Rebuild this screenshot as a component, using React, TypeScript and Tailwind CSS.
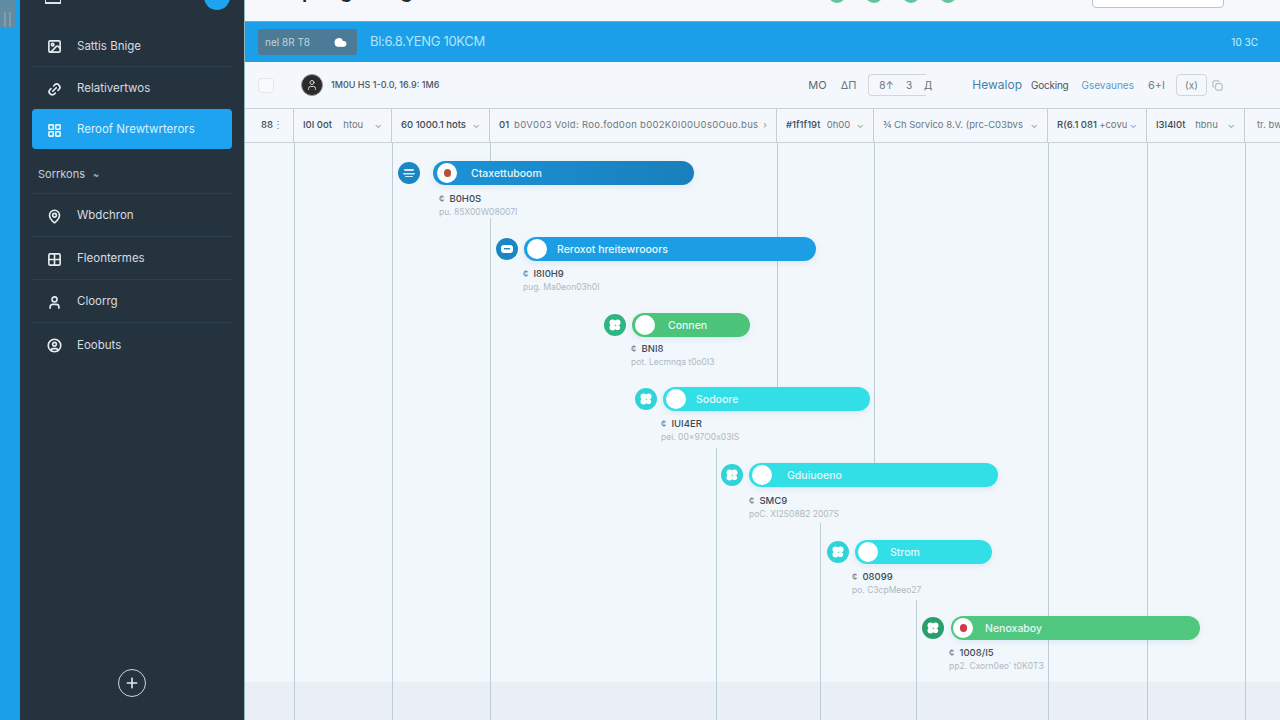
import React from "react";
import { Image, Link2, LayoutGrid, MapPin, Grid2x2, User, CircleUser, Plus, Cloud, Copy } from "lucide-react";

const font = { fontFamily: '"Inter", "Liberation Sans", sans-serif' };

function NavRow({ icon, label, h = "h-[43px]", divider = true }: { icon: React.ReactNode; label: string; h?: string; divider?: boolean }) {
  return (
    <div className={"mx-3 " + h + " flex items-center pt-[2px] pl-3.5 gap-[15px] text-[#d5dde3] text-[11.5px] " + (divider ? "border-b border-[#2e404d]" : "")}>
      <span className="w-4 flex justify-center text-[#e6edf1]">{icon}</span>
      <span>{label}</span>
    </div>
  );
}

function Sidebar() {
  return (
    <aside className="w-[225px] shrink-0 bg-[#25333f] border-r border-[#8fb7bd] flex flex-col relative">
      <div className="h-[25px] px-3 flex justify-between items-start relative">
        <div className="ml-[13px] w-4 h-[4px] border-b-2 border-x border-[#dfe6ea]" />
        <div className="w-[26px] h-[26px] rounded-full bg-[#1ea3f0] -mt-[16px] mr-[2px]" />
      </div>
      <NavRow h="h-[42px]" icon={<Image size={15} strokeWidth={2.6} />} label="Sattis Bnige" />
      <NavRow h="h-[42px]" divider={false} icon={<Link2 size={15} strokeWidth={2.6} className="-rotate-45" />} label="Relativertwos" />
      <div className="mx-3 h-10 rounded-sm bg-[#1ea3f0] flex items-center pt-[2px] pl-3.5 gap-[15px] text-[#d8f2ff] text-[11.5px]">
        <span className="w-4 flex justify-center text-[#e6f6ff]"><LayoutGrid size={15} strokeWidth={2.6} /></span>
        <span>Reroof Nrewtwrterors</span>
      </div>
      <div className="mx-3 mt-[7px] h-[38px] pl-1.5 flex items-center gap-2 text-[11px] text-[#c6d1d8] border-b border-[#2e404d]">
        <span>Sorrkons</span><span className="text-[9px]">~</span>
      </div>
      <NavRow icon={<MapPin size={15} strokeWidth={2.6} />} label="Wbdchron" />
      <NavRow icon={<Grid2x2 size={15} strokeWidth={2.6} />} label="Fleontermes" />
      <NavRow icon={<User size={15} strokeWidth={2.6} />} label="Cloorrg" />
      <NavRow divider={false} icon={<CircleUser size={15} strokeWidth={2.6} />} label="Eoobuts" />
      <div className="mt-auto mb-[23px] flex justify-center">
        <div className="w-[28px] h-[28px] rounded-full border-[1.5px] border-[#cdd6db] flex items-center justify-center text-[#e4eaee]">
          <Plus size={16} strokeWidth={2.4} />
        </div>
      </div>
    </aside>
  );
}

function TopHeader() {
  return (
    <div className="h-[21px] bg-[#f6f8fb] relative overflow-hidden shrink-0 flex">
      <div className="ml-[44px] -mt-[22px] h-[26px] text-[20px] leading-[26px] font-semibold text-[#1e2a33]">Spring Design</div>
      <div className="ml-auto flex gap-[19px] items-start mr-[323px] -mt-[15px]">
        <div className="w-[18px] h-[18px] rounded-full bg-[#63c39b]" />
        <div className="w-[18px] h-[18px] rounded-full bg-[#63c39b]" />
        <div className="w-[18px] h-[18px] rounded-full bg-[#63c39b]" />
        <div className="w-[18px] h-[18px] rounded-full bg-[#63c39b]" />
      </div>
      <div className="absolute left-[847px] top-[-10px] w-[132px] h-[18px] rounded border border-[#b9c2c8] bg-white" />
    </div>
  );
}

function BlueBar() {
  return (
    <div className="h-[41px] bg-[#1a9fe8] border-t border-[#35c0ee] flex items-center shrink-0 pl-[13px] pr-[22px]">
      <div className="w-[99px] h-[26px] rounded-[3px] bg-[#4b7b96] flex items-center pl-[7px] pr-[10px] justify-between">
        <span className="text-[10px] text-[#c5d3db]">nel 8R T8</span>
        <Cloud size={13} className="text-white" fill="white" />
      </div>
      <span className="ml-[13px] text-[13px] text-[#b3e4fa] tracking-tight">Bl:6.8.YENG 10KCM</span>
      <span className="ml-auto text-[10px] text-[#d4effb]">10 3C</span>
    </div>
  );
}

function Toolbar() {
  return (
    <div className="h-[46px] bg-[#f4f7fc] flex items-center shrink-0 pl-[13px] pr-[52px] text-[11px] text-[#44525c]">
      <div className="w-[16px] h-[15px] border border-[#e1e6ea] rounded-sm bg-[#f8fafc]" />
      <div className="ml-[27px] w-[22px] h-[22px] rounded-full bg-[#2a2a2a] border border-[#8a9298] flex items-center justify-center">
        <User size={12} className="text-[#d9d9d9]" />
      </div>
      <span className="ml-[8px] text-[9px] font-medium text-[#4a5660]">1M0U HS 1-0.0, 16.9: 1M6</span>
      <span className="ml-auto text-[#5c6870]">MO</span>
      <span className="ml-[14px] text-[#6a767e]">ΔΠ</span>
      <div className="ml-[12px] w-[58px] h-[22px] border-y border-l border-[#cfd6dc] rounded-l-sm flex items-center pl-[10px] gap-[12px] text-[10px] text-[#667079]">
        <span>8↑</span><span>3</span><span>Д</span>
      </div>
      <span className="ml-[46px] text-[12px] text-[#4a7fa6]">Hewalop</span>
      <span className="ml-[9px] text-[10px] tracking-tight text-[#4a5660]">Gocking</span>
      <span className="ml-[13px] text-[10px] text-[#5f9ac4]">Gsevaunes</span>
      <span className="ml-[14px] text-[#75818a]">6+I</span>
      <div className="ml-[11px] w-[31px] h-[22px] border border-[#cfd6dc] rounded-sm flex items-center justify-center text-[10px] text-[#75818a]">(x)</div>
      <div className="w-[21px] h-[22px] flex items-center justify-center text-[#a3adb4]"><Copy size={11} /></div>
    </div>
  );
}

const headers: { w: string; a: string; b?: string; c?: string; pad?: string; track?: string }[] = [
  { w: "w-[47px]", a: "88", b: "⋮", pad: "pl-[14px] pr-[10px]" },
  { w: "w-[98px]", a: "I0I 0ot", b: "htou", c: "⌄" },
  { w: "w-[98px]", a: "60 1000.1 hots", c: "⌄" },
  { w: "w-[287px]", a: "01", b: "b0V003 Vold: Roo.fod0on b002K0I00U0s0Ouo.bus", c: "›", track: "tracking-[0.3px]" },
  { w: "w-[97px]", a: "#1f1f19t", b: "0h00", c: "⌄" },
  { w: "w-[174px]", a: "", b: "3⁄4  Ch Sorvico 8.V. (prc-C03bvs", c: "⌄" },
  { w: "w-[99px]", a: "R(6.1 081", b: "+covu", c: "⌄" },
  { w: "w-[98px]", a: "I3I4I0t", b: "hbnu", c: "⌄" },
];

function HeaderRow() {
  return (
    <div className="h-[35px] flex shrink-0 pl-[2px] bg-[#f4f7fb] border-y border-[#c9d2d9] text-[9.5px] text-[#5a6770] overflow-hidden">
      {headers.map((h, i) => (
        <div key={i} className={h.w + " shrink-0 border-r border-[#c3ced6] flex items-center justify-between whitespace-pre " + (h.pad ?? "px-[9px]")}>
          {h.a && <span className="font-medium text-[#3d4a54]">{h.a}</span>}
          {h.b && <span className={"text-[#6b7780] truncate " + (h.track ?? "")}>{h.b}</span>}
          {h.c && <span className="text-[#8a959d]">{h.c}</span>}
        </div>
      ))}
      <div className="pl-3 flex items-center text-[#6b7780] whitespace-nowrap">tr. bw</div>
    </div>
  );
}

function Glyph({ kind }: { kind: "clover" | "bars" | "chat" }) {
  if (kind === "bars") {
    return (
      <svg width="14" height="12" viewBox="0 0 14 12" fill="#cfe9f7">
        <rect x="2" y="2" width="10" height="2" rx="1" />
        <rect x="1" y="6" width="12" height="1.5" rx="0.7" />
        <rect x="3" y="9" width="8" height="1" rx="0.5" />
      </svg>
    );
  }
  if (kind === "chat") {
    return (
      <svg width="14" height="12" viewBox="0 0 14 12" fill="#ffffff">
        <rect x="1" y="2" width="12" height="8" rx="3" />
        <rect x="4" y="5" width="6" height="1.4" fill="#1b86c4" />
      </svg>
    );
  }
  return (
    <svg width="14" height="14" viewBox="0 0 14 14" fill="#ffffff">
      <circle cx="4.5" cy="4.5" r="3" />
      <circle cx="9.5" cy="4.5" r="3" />
      <circle cx="4.5" cy="9.5" r="3" />
      <circle cx="9.5" cy="9.5" r="2.6" />
    </svg>
  );
}

type Task = {
  pos: string; meta: string; bar: string; ring: string; barW: string; gap: string; textMl: string; pad: string;
  glyph: "clover" | "bars" | "chat"; label: string; num: string; sub: string; dot?: string;
};

const tasks: Task[] = [
  { pos: "left-[153px] top-[18px]", meta: "left-[194px] top-[48px]", bar: "bg-gradient-to-r from-[#1b93d8] to-[#1a7fbc]", ring: "bg-[#1b86c4]", barW: "w-[261px]", gap: "w-[13px]", textMl: "ml-[14px]", pad: "pl-[4px]", glyph: "bars", label: "Ctaxettuboom", num: "B0H0S", sub: "pu. 85X00W08007I", dot: "bg-[#b5523f]" },
  { pos: "left-[251px] top-[94px]", meta: "left-[278px] top-[123px]", bar: "bg-[#1c9ee4]", ring: "bg-[#1b86c4]", barW: "w-[292px]", gap: "w-[6px]", textMl: "ml-[10px]", pad: "pl-[3px]", glyph: "chat", label: "Reroxot hreitewrooors", num: "I8I0H9", sub: "pug. Ma0eon03h0I" },
  { pos: "left-[359px] top-[170px]", meta: "left-[386px] top-[198px]", bar: "bg-[#4cc47a]", ring: "bg-[#2fb57f]", barW: "w-[118px]", gap: "w-[6px]", textMl: "ml-[13px]", pad: "pl-[3px]", glyph: "clover", label: "Connen", num: "BNI8", sub: "pot. Lecmnqa t0o0I3" },
  { pos: "left-[390px] top-[244px]", meta: "left-[416px] top-[273px]", bar: "bg-[#33dfe6]", ring: "bg-[#2fd3d8]", barW: "w-[207px]", gap: "w-[6px]", textMl: "ml-[10px]", pad: "pl-[3px]", glyph: "clover", label: "Sodoore", num: "IUI4ER", sub: "pei. 00x97O0x03IS" },
  { pos: "left-[476px] top-[320px]", meta: "left-[504px] top-[350px]", bar: "bg-[#33dfe6]", ring: "bg-[#2fd3d8]", barW: "w-[249px]", gap: "w-[6px]", textMl: "ml-[15px]", pad: "pl-[3px]", glyph: "clover", label: "Gduiuoeno", num: "SMC9", sub: "poC. XI2S08B2 2007S" },
  { pos: "left-[582px] top-[397px]", meta: "left-[607px] top-[426px]", bar: "bg-[#33dfe6]", ring: "bg-[#2fd3d8]", barW: "w-[137px]", gap: "w-[6px]", textMl: "ml-[12px]", pad: "pl-[3px]", glyph: "clover", label: "Strom", num: "08099", sub: "po. C3cpMeeo27" },
  { pos: "left-[677px] top-[473px]", meta: "left-[704px] top-[502px]", bar: "bg-[#4fc77f]", ring: "bg-[#2a9f6e]", barW: "w-[249px]", gap: "w-[7px]", textMl: "ml-[12px]", pad: "pl-[2px]", glyph: "clover", label: "Nenoxaboy", num: "1008/I5", sub: "pp2. Cxorn0eo' t0K0T3", dot: "bg-[#d33a4e]" },
];

function TaskNode({ t }: { t: Task }) {
  return (
    <div className={"absolute flex items-center h-[24px] " + t.pos}>
      <div className={"w-[22px] h-[22px] rounded-full flex items-center justify-center shrink-0 " + t.ring}>
        <Glyph kind={t.glyph} />
      </div>
      <div className={"shrink-0 " + t.gap} />
      <div className={"h-[24px] rounded-full flex items-center shrink-0 shadow-[0_2px_6px_rgba(120,170,200,0.18)] " + t.pad + " " + t.bar + " " + t.barW}>
        <div className="w-[20px] h-[20px] rounded-full bg-white flex items-center justify-center shrink-0">
          {t.dot && <div className={"w-[7px] h-[8px] rounded-sm " + t.dot} />}
        </div>
        <span className={"pt-px text-[10.5px] font-medium text-[#e6f7fb] whitespace-nowrap " + t.textMl}>{t.label}</span>
      </div>
    </div>
  );
}

const lines = [
  "left-[49px] top-0 bottom-0",
  "left-[147px] top-0 bottom-0",
  "left-[245px] top-0 h-[20px]",
  "left-[245px] top-[75px] bottom-0",
  "left-[532px] top-0 h-[244px]",
  "left-[629px] top-0 h-[320px]",
  "left-[471px] top-[305px] bottom-0",
  "left-[575px] top-[380px] bottom-0",
  "left-[671px] top-[457px] bottom-0",
  "left-[803px] top-0 bottom-0",
  "left-[902px] top-0 bottom-0",
  "left-[1000px] top-0 bottom-0",
];

function Gantt() {
  return (
    <div className="relative flex-1 flex flex-col bg-[#f2f7fc]">
      <div className="flex-1" />
      <div className="h-[38px] bg-[#e9eff5]" />
      {lines.map((l) => (
        <div key={l} className={"absolute w-px bg-[#bccdd5] " + l} />
      ))}
      {tasks.map((t) => (
        <TaskNode key={t.label} t={t} />
      ))}
      {tasks.map((t) => (
        <div key={t.num} className={"absolute " + t.meta}>
          <div className="text-[9.5px] leading-[15px] font-medium text-[#3e4a54] whitespace-nowrap"><span className="text-[#7c8790] mr-[5px]">¢</span>{t.num}</div>
          <div className="text-[8.5px] leading-[13px] text-[#aeb9c2] whitespace-nowrap">{t.sub}</div>
        </div>
      ))}
    </div>
  );
}

export default function App() {
  return (
    <div className="w-[1280px] h-[720px] flex overflow-hidden bg-[#f2f7fc]" style={font}>
      <div className="w-[20px] shrink-0 bg-[#1a9fe8] flex flex-col">
        <div className="w-[15px] h-[27px] bg-[#5f8ba3] flex justify-center gap-[3px] pt-[12px]">
          <div className="w-[2px] h-[15px] bg-[#8b9aa2]" />
          <div className="w-[2px] h-[15px] bg-[#8b9aa2]" />
        </div>
      </div>
      <Sidebar />
      <main className="flex-1 flex flex-col min-w-0">
        <TopHeader />
        <BlueBar />
        <Toolbar />
        <HeaderRow />
        <Gantt />
      </main>
    </div>
  );
}
